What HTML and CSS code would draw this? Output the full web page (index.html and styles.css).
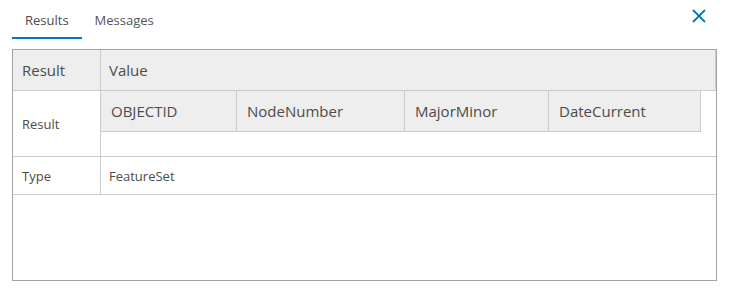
FILE: index.html
```html
<!DOCTYPE html>
<html>
<head>
<meta charset="utf-8">
<link rel="stylesheet" href="styles.css">
</head>
<body>
<div class="panel">
  <div class="topbar">
    <div class="tabs">
      <div class="tab active">Results</div>
      <div class="tab">Messages</div>
    </div>
    <button class="close" aria-label="Close">
      <svg width="14" height="14" viewBox="0 0 14 14"><path d="M1 1 L13 13 M13 1 L1 13" stroke="#0079c1" stroke-width="1.8" fill="none"/></svg>
    </button>
  </div>
  <div class="box">
    <div class="row head">
      <div class="c1">Result</div>
      <div class="c2">Value</div>
    </div>
    <div class="row result">
      <div class="c1 mid">Result</div>
      <div class="c2 nested">
        <div class="inner">
          <div class="ic w1">OBJECTID</div>
          <div class="ic w2">NodeNumber</div>
          <div class="ic w3">MajorMinor</div>
          <div class="ic w4">DateCurrent</div>
        </div>
      </div>
    </div>
    <div class="row type">
      <div class="c1 mid">Type</div>
      <div class="c2 mid">FeatureSet</div>
    </div>
  </div>
</div>
</body>
</html>
```
FILE: styles.css
```css
* { box-sizing: border-box; }
html, body { margin: 0; padding: 0; background: #fff; }
body { font-family: "Open Sans", "Liberation Sans", sans-serif; color: #4c4c4c; }
.panel { width: 732px; height: 289px; padding: 0 16px 0 12px; }
.topbar { display: flex; justify-content: space-between; align-items: flex-start; height: 49px; }
.tabs { display: flex; }
.tab { font-size: 13px; height: 39px; padding: 11px 13px 0; color: #555; border-bottom: 2px solid transparent; }
.tab.active { border-bottom-color: #0079c1; color: #4c4c4c; }
.close { background: none; border: 0; padding: 0; margin: 9px 10px 0 0; width: 14px; height: 14px; display: block; }
.close svg { display: block; }
.box { width: 705px; height: 232px; border: 1px solid #a3a3a3; }
.row { display: flex; border-bottom: 1px solid #cccccc; }
.c1 { width: 88px; border-right: 1px solid #cccccc; padding-left: 9px; flex: none; }
.c2 { flex: 1; padding-left: 8px; }
.head { height: 41px; background: #eeeeee; font-size: 15px; }
.head .c1, .head .c2 { display: flex; align-items: center; }
.head .c2 { border-right: 1px solid #cccccc; }
.mid { display: flex; align-items: center; font-size: 13px; }
.result { height: 66px; }
.nested { padding: 0 0 24px 0; }
.inner { display: flex; height: 41px; border-bottom: 1px solid #cccccc; width: 600px; }
.ic { background: #eeeeee; border-right: 1px solid #cccccc; font-size: 15px; padding-left: 10px; display: flex; align-items: center; }
.w1 { width: 136px; }
.w2 { width: 168px; }
.w3 { width: 144px; }
.w4 { width: 152px; }
.type { height: 38px; }
```
